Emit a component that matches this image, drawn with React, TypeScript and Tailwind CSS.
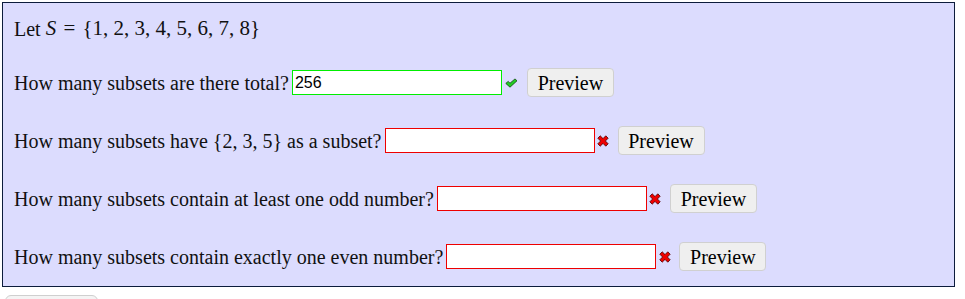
import React from "react";

function CheckMark() {
  return (
    <svg width="13" height="10" viewBox="0 0 13 10" className="shrink-0">
      <path
        d="M0.8 5.4 L3.2 3.4 L5 5.2 L10 0.9 L12 2.8 L5 9.2 Z"
        fill="#22cc22"
        stroke="#0a4a0a"
        strokeWidth="0.8"
        strokeLinejoin="round"
      />
    </svg>
  );
}

function CrossMark() {
  return (
    <svg width="12" height="12" viewBox="0 0 12 12" className="shrink-0">
      <path
        d="M0.8 3.2 L3.2 0.8 L6 3.6 L8.8 0.8 L11.2 3.2 L8.4 6 L11.2 8.8 L8.8 11.2 L6 8.4 L3.2 11.2 L0.8 8.8 L3.6 6 Z"
        fill="#ee0000"
        stroke="#4a0000"
        strokeWidth="0.8"
        strokeLinejoin="round"
      />
    </svg>
  );
}

function Question({ children, value, ok }: { children: React.ReactNode; value: string; ok: boolean }) {
  return (
    <div className="flex h-[29px] items-center">
      <span className="whitespace-pre">{children}</span>
      <input
        readOnly
        value={value}
        className={`ml-[3px] h-[25px] w-[210px] bg-white px-[2px] font-['Liberation_Sans',Arial,sans-serif] text-[16px] text-black outline-none border ${ok ? "border-[#00ee00]" : "border-[#ee0000]"}`}
      />
      <span className={`flex items-center justify-center ${ok ? "ml-[3px] w-[14px]" : "ml-[2px] w-[13px]"}`}>
        {ok ? <CheckMark /> : <CrossMark />}
      </span>
      <button className="ml-[8px] h-[29px] w-[87px] rounded-[4px] border border-[#d0d0d0] bg-[#efefef] text-[20px] leading-none text-black">
        Preview
      </button>
    </div>
  );
}

function M({ children, size = "text-[21px]" }: { children: React.ReactNode; size?: string }) {
  return <span className={`font-['Liberation_Serif',serif] ${size}`}>{children}</span>;
}

export default function App() {
  return (
    <div className="h-[299px] overflow-hidden bg-white font-['Liberation_Serif','Times_New_Roman',serif] text-[20px] text-[#111]">
      <div className="ml-[2px] mt-[2px] h-[285px] w-[953px] border border-[#0c1c3c] bg-[#dcdcfe] pl-[11px] pt-[11px]">
        <div className="mb-[25px] flex h-[29px] items-center whitespace-pre">
          Let{" "}
          <M>
            <i>S</i> <span className="mx-[2px]">=</span> {"{"}1, 2, 3, 4, 5, 6, 7, 8{"}"}
          </M>
        </div>
        <div className="flex flex-col gap-[29px]">
          <Question value="256" ok>How many subsets are there total?</Question>
          <Question value="" ok={false}>
            How many subsets have <M size="text-[20px]">{"{"}2, 3, 5{"}"}</M> as a subset?
          </Question>
          <Question value="" ok={false}>How many subsets contain at least one odd number?</Question>
          <Question value="" ok={false}>How many subsets contain exactly one even number?</Question>
        </div>
      </div>
      <div className="ml-[5px] mt-[8px] h-[20px] w-[93px] rounded-t-[6px] border border-[#cfcfcf] bg-[#f4f4f4]" />
    </div>
  );
}
